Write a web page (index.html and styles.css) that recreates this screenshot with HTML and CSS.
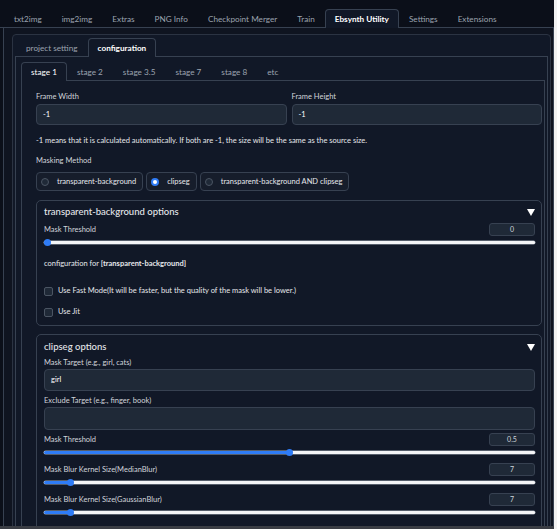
FILE: index.html
```html
<!DOCTYPE html>
<html>
<head>
	<link rel="stylesheet" href="styles.css">
</head>
<body>
	<div class="app">
		<div class="tabnav top">
			<button class="tab">txt2img</button>
			<button class="tab">img2img</button>
			<button class="tab">Extras</button>
			<button class="tab">PNG Info</button>
			<button class="tab">Checkpoint Merger</button>
			<button class="tab">Train</button>
			<button class="tab selected">Ebsynth Utility</button>
			<button class="tab">Settings</button>
			<button class="tab">Extensions</button>
		</div>
		<div class="panel lvl1">
			<div class="block">
				<div class="tabnav sub">
					<button class="tab">project setting</button>
					<button class="tab selected">configuration</button>
				</div>
				<div class="panel lvl2">
					<div class="tabnav stage">
						<button class="tab selected">stage 1</button>
						<button class="tab">stage 2</button>
						<button class="tab">stage 3.5</button>
						<button class="tab">stage 7</button>
						<button class="tab">stage 8</button>
						<button class="tab">etc</button>
					</div>
					<div class="panel lvl3">
						<div class="row">
							<div class="field">
								<label>Frame Width</label>
								<div class="textbox">-1</div>
							</div>
							<div class="field">
								<label>Frame Height</label>
								<div class="textbox">-1</div>
							</div>
						</div>
						<p class="note">-1 means that it is calculated automatically. If both are -1, the size will be the same as the source size.</p>
						<label class="method-label">Masking Method</label>
						<div class="radios">
							<div class="radio"><span class="dot"></span>transparent-background</div>
							<div class="radio"><span class="dot on"></span>clipseg</div>
							<div class="radio"><span class="dot"></span>transparent-background AND clipseg</div>
						</div>

						<div class="accordion first">
							<div class="acc-head">
								<span>transparent-background options</span>
								<svg class="caret" width="8" height="7" viewBox="0 0 8 7"><polygon points="0,0 8,0 4,7" fill="#fff"/></svg>
							</div>
							<div class="slider-head">
								<label>Mask Threshold</label>
								<div class="num">0</div>
							</div>
							<div class="slider-wrap">
								<div class="track">
									<div class="fill" style="width: 4px"></div>
									<div class="thumb" style="left: 0px"></div>
								</div>
							</div>
							<p class="cfg">configuration for <b>[transparent-background]</b></p>
							<div class="check first-check"><span class="box"></span>Use Fast Mode(It will be faster, but the quality of the mask will be lower.)</div>
							<div class="check"><span class="box"></span>Use Jit</div>
						</div>

						<div class="accordion second">
							<div class="acc-head">
								<span>clipseg options</span>
								<svg class="caret" width="8" height="7" viewBox="0 0 8 7"><polygon points="0,0 8,0 4,7" fill="#fff"/></svg>
							</div>
							<label class="inner-label">Mask Target (e.g., girl, cats)</label>
							<div class="textbox wide">girl</div>
							<label class="inner-label">Exclude Target (e.g., finger, book)</label>
							<div class="textbox wide tall"></div>
							<div class="slider-head">
								<label>Mask Threshold</label>
								<div class="num">0.5</div>
							</div>
							<div class="slider-wrap">
								<div class="track">
									<div class="fill" style="width: 246px"></div>
									<div class="thumb" style="left: 242px"></div>
								</div>
							</div>
							<div class="slider-head">
								<label>Mask Blur Kernel Size(MedianBlur)</label>
								<div class="num">7</div>
							</div>
							<div class="slider-wrap">
								<div class="track">
									<div class="fill" style="width: 27px"></div>
									<div class="thumb" style="left: 23px"></div>
								</div>
							</div>
							<div class="slider-head">
								<label>Mask Blur Kernel Size(GaussianBlur)</label>
								<div class="num">7</div>
							</div>
							<div class="slider-wrap">
								<div class="track">
									<div class="fill" style="width: 27px"></div>
									<div class="thumb" style="left: 23px"></div>
								</div>
							</div>
						</div>
					</div>
				</div>
			</div>
		</div>
	</div>
	<div class="statusbar"></div>
</body>
</html>
```

FILE: styles.css
```css
html,body{
	margin: 0;
	padding: 0;
	background: #f2f2f2;
	font-family: Lato, "Liberation Sans", sans-serif;
	color: #e5e7eb;
}
.app{
	width: 554px;
	height: 526px;
	overflow: hidden;
	background: #0b0f19;
}
.statusbar{
	width: 554px;
	height: 3px;
	background: #3a3d44;
}
label{
	display: block;
	font-size: 7.5px;
	line-height: 10px;
	color: #d1d5db;
}

/* tabs */
.tabnav{
	display: flex;
	border-bottom: 1px solid #374151;
}
.tabnav.top{
	padding: 9px 0 0 4px;
}
.tab{
	flex-shrink: 0;
	white-space: nowrap;
	height: 18px;
	padding: 0 9px;
	border: 1px solid transparent;
	border-bottom: none;
	border-radius: 4px 4px 0 0;
	background: none;
	font-family: inherit;
	font-size: 8.2px;
	color: #9ca3af;
	margin-bottom: -1px;
}
.tab.selected{
	border-color: #374151;
	background: #111827;
	color: #fff;
	font-weight: 700;
	height: 19px;
}
.stage .tab.selected{
	font-weight: 400;
}
.tabnav.sub{
	padding-left: 1px;
}

/* panels */
.panel{
	background: #111827;
	border: 1px solid #374151;
	border-top: none;
}
.lvl1{
	margin-left: 3px;
	height: 520px;
	padding: 6px 2px 0 8px;
	background: #0f1420;
}
.block{
	border: 1px solid #2b3342;
	border-radius: 4px;
	padding: 3px 2px 0;
	background: #111827;
}
.lvl2{
	padding: 5px 2px 0 5px;
}
.lvl3{
	padding: 11px 2px 0 14px;
}

/* fields */
.row{
	display: flex;
	gap: 5px;
}
.field{
	flex: 1;
}
.field label{
	margin-bottom: 2px;
}
.textbox{
	height: 21px;
	box-sizing: border-box;
	border: 1px solid #374151;
	border-radius: 4px;
	background: #1f2937;
	font-size: 7.5px;
	line-height: 19px;
	padding-left: 6px;
	color: #fff;
}
.note{
	margin: 11px 0 0;
	font-size: 7.5px;
	line-height: 10px;
}
.method-label{
	margin-top: 10px;
}
.radios{
	display: flex;
	gap: 3px;
	margin-top: 6px;
}
.radio{
	display: flex;
	align-items: center;
	height: 19px;
	box-sizing: border-box;
	padding: 0 6px 0 4px;
	border: 1px solid #374151;
	border-radius: 4px;
	background: #161d2b;
	font-size: 7.5px;
	gap: 8px;
}
.dot{
	width: 8px;
	height: 8px;
	box-sizing: border-box;
	border-radius: 50%;
	border: 1px solid #4b5563;
	background: #1f2937;
}
.dot.on{
	border: 2.5px solid #2f7cf6;
	background: #fff;
}

/* accordions */
.accordion{
	border: 1px solid #374151;
	border-radius: 5px;
	padding: 5px 6px 0 7px;
	box-sizing: border-box;
}
.accordion.first{
	margin-top: 9px;
	height: 126px;
}
.accordion.second{
	margin-top: 8px;
	height: 200px;
	padding-top: 6px;
}
.acc-head{
	display: flex;
	justify-content: space-between;
	align-items: center;
	font-size: 9.5px;
	line-height: 12px;
	font-weight: 500;
	padding-right: 0;
}
.slider-head{
	display: flex;
	justify-content: space-between;
	align-items: center;
	margin-top: 5px;
}
.num{
	width: 46px;
	height: 13px;
	box-sizing: border-box;
	border: 1px solid #374151;
	border-radius: 3px;
	background: #1f2937;
	font-size: 7px;
	line-height: 11px;
	text-align: center;
	color: #d1d5db;
}
.slider-wrap{
	padding: 5px 0 10px;
}
.track{
	position: relative;
	height: 3px;
	border-radius: 2px;
	background: #f3f4f6;
	box-shadow: 0 0 0 0.5px #9ca3af;
}
.fill{
	height: 3px;
	border-radius: 2px;
	background: #2f7cf6;
}
.thumb{
	position: absolute;
	top: -2px;
	width: 7px;
	height: 7px;
	border-radius: 50%;
	background: #2f7cf6;
}
.cfg{
	margin: 5px 0 0;
	font-size: 7.5px;
	line-height: 10px;
}
.cfg b{
	font-weight: 700;
}
.check{
	display: flex;
	align-items: center;
	gap: 5px;
	font-size: 7.5px;
	line-height: 10px;
	margin-top: 11px;
}
.check.first-check{
	margin-top: 17px;
}
.box{
	width: 9px;
	height: 9px;
	box-sizing: border-box;
	border: 1px solid #4b5563;
	border-radius: 2px;
	background: #1f2937;
}
.inner-label{
	margin-top: 5px;
}
.textbox.wide{
	height: 22px;
	margin-top: 1px;
	line-height: 20px;
}
.textbox.tall{
	height: 23px;
}
.accordion.second .slider-head{
	margin-top: 0;
}
.accordion.second .tall + .slider-head{
	margin-top: 3px;
}
.accordion.second .slider-wrap{
	padding-bottom: 9px;
}
```
